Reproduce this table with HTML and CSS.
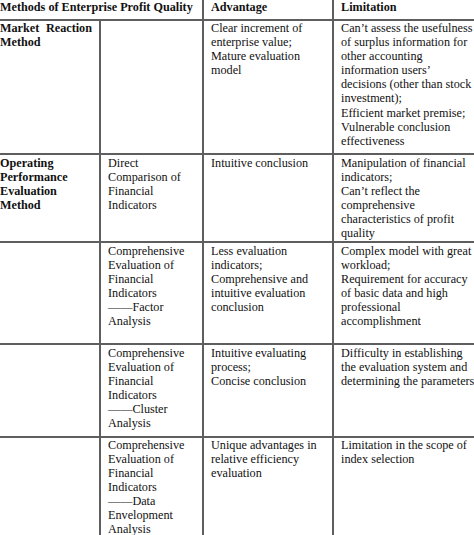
FILE: index.html
```html
<!DOCTYPE html>
<html>
<head>
<meta charset="utf-8">
<link rel="stylesheet" href="styles.css">
</head>
<body>
<table class="grid">
  <colgroup>
    <col class="c1">
    <col class="c2">
    <col class="c3">
    <col class="c4">
  </colgroup>
  <tr class="head">
    <th colspan="2" class="first">Methods of Enterprise Profit Quality</th>
    <th>Advantage</th>
    <th class="last">Limitation</th>
  </tr>
  <tr class="r1">
    <td class="first method">Market Reaction Method</td>
    <td></td>
    <td>Clear increment of enterprise value;<br>Mature evaluation model</td>
    <td class="last">Can’t assess the usefulness of surplus information for other accounting information users’ decisions (other than stock investment);<br>Efficient market premise;<br>Vulnerable conclusion effectiveness</td>
  </tr>
  <tr class="r2">
    <td class="first method">Operating Performance Evaluation Method</td>
    <td>Direct Comparison of Financial Indicators</td>
    <td>Intuitive conclusion</td>
    <td class="last">Manipulation of financial indicators;<br>Can’t reflect the comprehensive characteristics of profit quality</td>
  </tr>
  <tr class="r3">
    <td class="first"></td>
    <td>Comprehensive Evaluation of Financial Indicators <span class="nw">——Factor</span> Analysis</td>
    <td>Less evaluation indicators;<br>Comprehensive and intuitive evaluation conclusion</td>
    <td class="last">Complex model with great workload;<br>Requirement for accuracy of basic data and high professional accomplishment</td>
  </tr>
  <tr class="r4">
    <td class="first"></td>
    <td>Comprehensive Evaluation of Financial Indicators <span class="nw">——Cluster</span> Analysis</td>
    <td>Intuitive evaluating process;<br>Concise conclusion</td>
    <td class="last">Difficulty in establishing the evaluation system and determining the parameters</td>
  </tr>
  <tr class="r5">
    <td class="first"></td>
    <td>Comprehensive Evaluation of Financial Indicators <span class="nw">——Data</span> Envelopment Analysis</td>
    <td>Unique advantages in relative efficiency evaluation</td>
    <td class="last">Limitation in the scope of index selection</td>
  </tr>
</table>
</body>
</html>
```
FILE: styles.css
```css
html, body {
  margin: 0;
  padding: 0;
  background: #ffffff;
  overflow: hidden;
}

body {
  width: 474px;
  height: 535px;
  font-family: "Liberation Serif", "Times New Roman", serif;
  font-size: 12.2px;
  line-height: 14.1px;
  color: #111111;
}

.grid {
  width: 480px;
  table-layout: fixed;
  border-collapse: collapse;
}

.c1 { width: 100px; }
.c2 { width: 103px; }
.c3 { width: 130px; }
.c4 { width: 147px; }

.grid th,
.grid td {
  border: 2px solid #5e5e5e;
  padding: 1px 6px 0 7px;
  vertical-align: top;
  text-align: left;
}

.grid th {
  font-weight: bold;
  border-top: none;
}

.grid .first {
  border-left: none;
  padding-left: 0;
}

.grid .last {
  border-right: none;
  padding-right: 3px;
}

.grid .method {
  font-weight: bold;
  text-align: justify;
  padding-right: 7px;
}

.nw {
  white-space: nowrap;
}

.grid tr.r5 td {
  border-bottom: none;
}

.head th { height: 19px; padding-top: 0; }
.r1 td { height: 132px; padding-top: 0; }
.r2 td { height: 84px; }
.r3 td { height: 99px; }
.r4 td { height: 90px; }
.r5 td { height: 110px; padding-top: 0; }
```
